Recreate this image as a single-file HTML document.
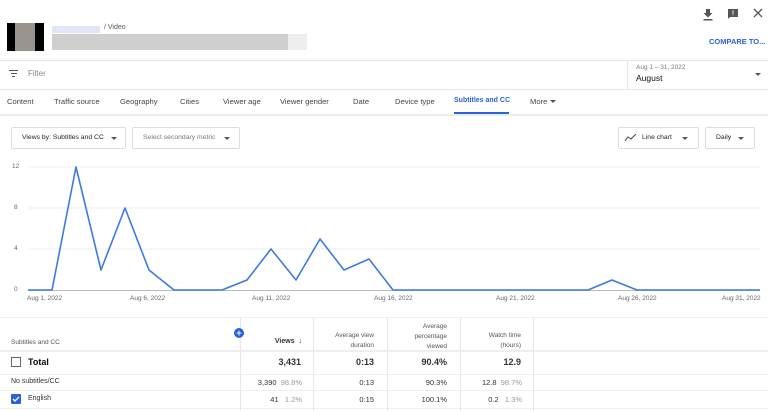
<!DOCTYPE html>
<html><head><meta charset="utf-8"><style>
*{box-sizing:border-box;margin:0;padding:0}
body{width:768px;height:411px;overflow:hidden;background:#fff;font-family:"Liberation Sans",Arial,sans-serif;color:#0d0d0d;position:relative;font-size:8px}
.a{position:absolute;white-space:nowrap}
.hl{position:absolute;left:0;right:0;height:1px;background:#e5e5e5}
.dd{position:absolute;border:1px solid #ddd;border-radius:2px;height:22px;font-size:6.8px;line-height:20px;padding-left:10px;color:#222;white-space:nowrap}
.car{position:absolute;width:0;height:0;border-left:3px solid transparent;border-right:3px solid transparent;border-top:3px solid #555}
.tab{position:absolute;top:97px;font-size:7.6px;color:#444;white-space:nowrap}
.vl{position:absolute;width:1px;background:#e8e8e8;top:317px;height:94px}
.r{position:absolute;text-align:right;font-size:7.5px;color:#333;white-space:nowrap}
.g{color:#999}
.ax{position:absolute;font-size:6.5px;color:#666;white-space:nowrap}
</style></head><body>
<div class="a" style="left:7px;top:23px;width:37px;height:28px;background:#000"></div>
<div class="a" style="left:15px;top:23px;width:20px;height:28px;background:#9a948f"></div>
<div class="a" style="left:52px;top:26px;width:48px;height:7px;background:#dfe6f5"></div>
<div class="a" style="left:104px;top:24px;font-size:7px;color:#555">/ Video</div>
<div class="a" style="left:52px;top:34px;width:236px;height:16px;background:#cfcfcf"></div>
<div class="a" style="left:288px;top:34px;width:19px;height:16px;background:#eee"></div>
<svg class="a" style="left:702px;top:7px" width="64" height="14" viewBox="0 0 64 14">
<path d="M3 2h4v4h2.5L5 10.5 0.5 6H3z M0.5 12h9v1.5h-9z" fill="#555" transform="translate(1,0)"/>
<path d="M26 2h10v8h-8l-2 2z" fill="#555"/><rect x="30.5" y="3.5" width="1" height="3" fill="#fff"/><rect x="30.5" y="7.3" width="1" height="1" fill="#fff"/>
<path d="M52 2l8 8M60 2l-8 8" stroke="#555" stroke-width="1.3"/>
</svg>
<div class="a" style="left:709px;top:37px;font-size:7.5px;font-weight:bold;color:#2a62d9">COMPARE TO...</div>
<div class="hl" style="top:60px"></div>
<div class="a" style="left:9px;top:70px;width:9px;height:1px;background:#555"></div>
<div class="a" style="left:10.5px;top:73px;width:6px;height:1px;background:#555"></div>
<div class="a" style="left:12px;top:76px;width:3px;height:1px;background:#555"></div>
<div class="a" style="left:28px;top:69px;font-size:8px;color:#888">Filter</div>
<div class="a" style="left:627px;top:60px;width:1px;height:29px;background:#e5e5e5"></div>
<div class="a" style="left:636px;top:64px;font-size:6.5px;color:#777">Aug 1 – 31, 2022</div>
<div class="a" style="left:636px;top:73px;font-size:8.5px;color:#111">August</div>
<div class="car" style="left:755px;top:73px"></div>
<div class="hl" style="top:89px"></div>
<div class="tab" style="left:7px">Content</div>
<div class="tab" style="left:54px">Traffic source</div>
<div class="tab" style="left:120px">Geography</div>
<div class="tab" style="left:180px">Cities</div>
<div class="tab" style="left:223px">Viewer age</div>
<div class="tab" style="left:280px">Viewer gender</div>
<div class="tab" style="left:353px">Date</div>
<div class="tab" style="left:395px">Device type</div>
<div class="tab" style="left:454px;color:#2a62d9;font-weight:bold;font-size:7px">Subtitles and CC</div>
<div class="a" style="left:454px;top:112px;width:55px;height:2px;background:#2a62d9"></div>
<div class="tab" style="left:530px">More</div>
<div class="car" style="left:550px;top:100px"></div>
<div class="hl" style="top:114px;height:2px;background:#ececec"></div>
<div class="dd" style="left:11px;top:127px;width:115px">Views by: Subtitles and CC</div><div class="car" style="left:111px;top:137px"></div>
<div class="dd" style="left:132px;top:127px;width:108px;color:#777">Select secondary metric</div><div class="car" style="left:224px;top:137px"></div>
<div class="dd" style="left:618px;top:127px;width:81px;padding-left:23px">Line chart</div><div class="car" style="left:682px;top:137px"></div>
<svg class="a" style="left:625px;top:134px" width="12" height="8"><path d="M0 7l3-4 3 2 5-5" stroke="#444" fill="none" stroke-width="1"/></svg>
<div class="dd" style="left:705px;top:127px;width:50px">Daily</div><div class="car" style="left:738px;top:137px"></div>
<svg class="a" style="left:0;top:155px" width="768" height="155">
<g stroke="#eee" stroke-width="1"><line x1="28" x2="760" y1="12" y2="12"/><line x1="28" x2="760" y1="53" y2="53"/><line x1="28" x2="760" y1="94" y2="94"/></g>
<line x1="28" x2="760" y1="135.5" y2="135.5" stroke="#bbb"/>
<polyline fill="none" stroke="#3d7ae0" stroke-width="1.6" stroke-linejoin="round" points="28,135 52,135 76,12 101,115 125,53 149,115 174,135 198,135 222,135 247,125 271,94 296,125 320,84 344,115 369,104 393,135 417,135 442,135 466,135 490,135 515,135 539,135 564,135 588,135 612,125 637,135 661,135 685,135 710,135 734,135 760,135"/>
</svg>
<div class="ax" style="left:12px;top:163px">12</div>
<div class="ax" style="left:14px;top:204px">8</div>
<div class="ax" style="left:14px;top:245px">4</div>
<div class="ax" style="left:14px;top:286px">0</div>
<div class="ax" style="left:27px;top:295px">Aug 1, 2022</div>
<div class="ax" style="left:130px;top:295px">Aug 6, 2022</div>
<div class="ax" style="left:252px;top:295px">Aug 11, 2022</div>
<div class="ax" style="left:374px;top:295px">Aug 16, 2022</div>
<div class="ax" style="left:496px;top:295px">Aug 21, 2022</div>
<div class="ax" style="left:618px;top:295px">Aug 26, 2022</div>
<div class="ax" style="left:722px;top:295px">Aug 31, 2022</div>
<div class="hl" style="top:317px;background:#eee"></div>
<div class="hl" style="top:350px;height:2px;background:#eee"></div>
<div class="hl" style="top:374px;background:#eee"></div>
<div class="hl" style="top:390px;background:#eee"></div>
<div class="hl" style="top:408px;background:#eee"></div>
<div class="vl" style="left:240px"></div><div class="vl" style="left:313px"></div><div class="vl" style="left:387px"></div><div class="vl" style="left:460px"></div><div class="vl" style="left:533px"></div>
<div class="a" style="left:11px;top:339px;font-size:6.5px;color:#555">Subtitles and CC</div>
<div class="a" style="left:234px;top:328px;width:10px;height:10px;border-radius:50%;background:#2a62d9;color:#fff;font-size:9px;line-height:10px;text-align:center;font-weight:bold">+</div>
<div class="r" style="left:240px;width:62px;top:338px;font-weight:bold;font-size:7px">Views &nbsp;↓</div>
<div class="r" style="left:313px;width:61px;top:331px;font-size:6.5px;color:#555;line-height:10px">Average view<br>duration</div>
<div class="r" style="left:387px;width:60px;top:322px;font-size:6.5px;color:#555;line-height:10px">Average<br>percentage<br>viewed</div>
<div class="r" style="left:460px;width:61px;top:331px;font-size:6.5px;color:#555;line-height:10px">Watch time<br>(hours)</div>
<div class="a" style="left:11px;top:357px;width:10px;height:10px;border:1.3px solid #666"></div>
<div class="a" style="left:28px;top:357px;font-size:9px;font-weight:bold">Total</div>
<div class="r" style="left:240px;width:61px;top:357px;font-size:9px;font-weight:bold">3,431</div>
<div class="r" style="left:313px;width:61px;top:357px;font-size:9px;font-weight:bold">0:13</div>
<div class="r" style="left:387px;width:60px;top:357px;font-size:9px;font-weight:bold">90.4%</div>
<div class="r" style="left:460px;width:61px;top:357px;font-size:9px;font-weight:bold">12.9</div>
<div class="a" style="left:11px;top:378px;font-size:7px;color:#333">No subtitles/CC</div>
<div class="r" style="left:240px;width:62px;top:378px">3,390 &nbsp;<span class="g">98.8%</span></div>
<div class="r" style="left:313px;width:61px;top:378px">0:13</div>
<div class="r" style="left:387px;width:60px;top:378px">90.3%</div>
<div class="r" style="left:460px;width:62px;top:378px">12.8 &nbsp;<span class="g">98.7%</span></div>
<div class="a" style="left:11px;top:394px;width:10px;height:10px;background:#2a62d9;border-radius:1px"><svg width="10" height="10" style="display:block"><path d="M2 5l2 2 4-4" stroke="#fff" stroke-width="1.3" fill="none"/></svg></div>
<div class="a" style="left:28px;top:395px;font-size:7px;color:#333">English</div>
<div class="r" style="left:240px;width:62px;top:395px">41 &nbsp;&nbsp;<span class="g">1.2%</span></div>
<div class="r" style="left:313px;width:61px;top:395px">0:15</div>
<div class="r" style="left:387px;width:60px;top:395px">100.1%</div>
<div class="r" style="left:460px;width:62px;top:395px">0.2 &nbsp;&nbsp;<span class="g">1.3%</span></div>
</body></html>
